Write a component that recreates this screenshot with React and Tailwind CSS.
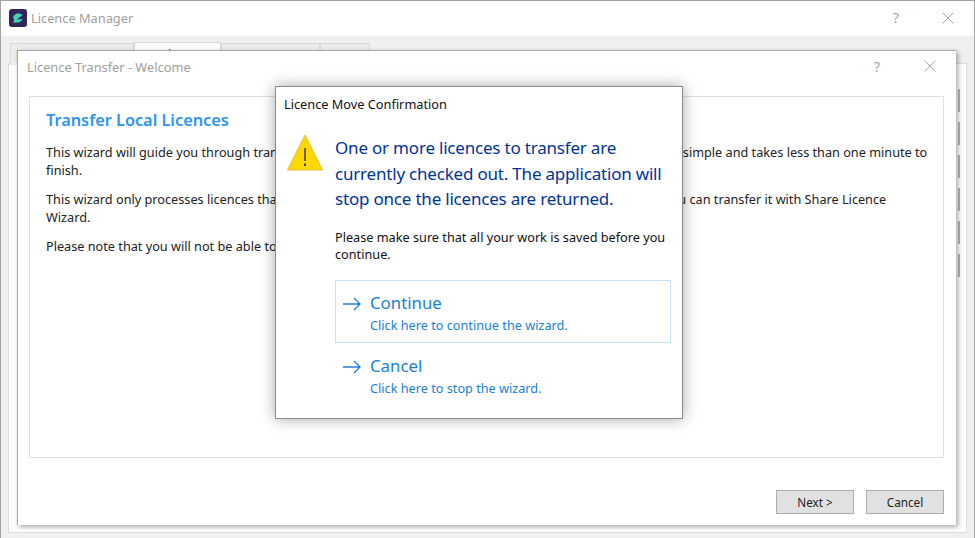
const font = { fontFamily: '"Noto Sans", sans-serif' };

const CloseGlyph = () => (
  <svg width="12" height="12" viewBox="0 0 12 12" fill="none" stroke="#a6a6a6" strokeWidth="1">
    <path d="M.5.5l11 11M11.5.5l-11 11" />
  </svg>
);

const AppLogo = () => (
  <svg width="18" height="18" viewBox="0 0 18 18">
    <rect width="18" height="18" rx="3" fill="#33265c" />
    <path d="M4 9.5C4 6.5 6.5 4.5 9.5 4.5c1.6 0 3 .5 4 1.5L8 10.5l5.5-.5c-.8 2.2-2.8 3.5-5 3.5-1 0-2-.1-4 .5.4-1.5.5-3 .5-4.5z" fill="#3fd6b4" />
  </svg>
);

const WarningIcon = () => (
  <svg width="36" height="37" viewBox="0 0 36 37">
    <path d="M18 1L35.5 36H.5z" fill="#ffd800" stroke="#e8b93c" strokeWidth="1" strokeLinejoin="round" />
    <path d="M18 14v13" stroke="#111" strokeWidth="1.2" />
    <path d="M18 29.5v2.5" stroke="#111" strokeWidth="1.5" />
  </svg>
);

const Arrow = () => (
  <svg width="18" height="14" viewBox="0 0 18 14" fill="none" stroke="#1a7fd6" strokeWidth="1.3">
    <path d="M0 7h17M11 1l6 6-6 6" />
  </svg>
);

const tabs = [
  { label: 'Licence Activation', width: 'w-[124px]' },
  { label: 'Local Licences', width: 'w-[87px]', active: true },
  { label: 'Network Licences', width: 'w-[99px]' },
  { label: 'About', width: 'w-[50px]' },
];

const actions = [
  { title: 'Continue', hint: 'Click here to continue the wizard.', focused: true },
  { title: 'Cancel', hint: 'Click here to stop the wizard.' },
];

const App = () => {
  return (
    <div style={font} className="relative w-[975px] h-[538px] overflow-hidden bg-[#f0f0f0] border-t border-l border-r border-[#a3a3a3]">
      {/* Bit of the desktop behind the window */}
      <div className="absolute left-[340px] -top-[1px] flex h-[1px] w-[77px] bg-[#5a4f7a]">
        <div className="ml-[21px] w-[5px] bg-[#4fb8a0]" />
        <div className="ml-[19px] w-[9px] bg-[#4fb8a0]" />
      </div>

      {/* Main window */}
      <div className="flex items-center h-[35px] bg-white pl-[8px] pr-[20px]">
        <span className="mb-[2px] flex"><AppLogo /></span>
        <span className="ml-[4px] text-[12.8px] text-[#a0a0a0]">Licence Manager</span>
        <span className="ml-auto mb-[2px] text-[14px] text-[#a6a6a6]">?</span>
        <span className="ml-[43px] mb-[2px] flex"><CloseGlyph /></span>
      </div>
      <div className="flex pl-[9px] pt-[7px] h-[14px] overflow-visible">
        {tabs.map((tab) => (
          <div
            key={tab.label}
            className={`${tab.width} shrink-0 h-[22px] px-[5px] text-[12px] leading-[24px] text-[#333] border border-b-0 border-[#d9d9d9] ${tab.active ? 'bg-white -mt-[1px] pl-[7px]' : 'bg-[#ececec]'}`}
          >
            {tab.label}
          </div>
        ))}
      </div>
      <div className="mx-[7px] mt-[13px] h-[470px] bg-white border border-[#dcdcdc] flex flex-col items-end pr-[6px] pt-[25px] gap-[10px]">
        {[0, 1, 2, 3, 4, 5].map((i) => (
          <div key={i} className="h-[23px] w-[2px] bg-[#b4b4b4]" />
        ))}
      </div>

      {/* Wizard dialog */}
      <div className="absolute left-[16px] top-[49px] w-[939px] h-[475px] bg-white border-t border-l border-[#a8a8a8] shadow-[2px_2px_5px_rgba(0,0,0,0.35)] flex flex-col">
        <div className="flex items-center h-[34px] pl-[9px] pr-[20px] text-[12.8px] text-[#a0a0a0]">
          <span>Licence Transfer - Welcome</span>
          <span className="ml-auto mb-[3px] text-[14px] text-[#a6a6a6]">?</span>
          <span className="ml-[44px] mb-[4px] flex"><CloseGlyph /></span>
        </div>
        <div className="mt-[11px] ml-[11px] w-[915px] h-[362px] border border-[#e0e0e0] pl-[16px] pr-[12px] pt-[12px] text-[12.7px] leading-[17.5px] text-[#222]">
          <h1 className="text-[16.3px] leading-[22px] font-semibold text-[#2b95f5]">Transfer Local Licences</h1>
          <p className="mt-[13px]">
            This wizard will guide you through transferring all your local licences to any other computer. The process is simple and takes less than one minute to finish.
          </p>
          <p className="mt-[12px]">
            This wizard only processes licences that are stored on this computer. If a licence is shared on a network, you can transfer it with Share Licence Wizard.
          </p>
          <p className="mt-[12px]">
            Please note that you will not be able to use the application during the transfer.
          </p>
        </div>
        <div className="flex justify-end gap-[12px] mt-[32px] pr-[12px]">
          <button className="w-[78px] h-[24px] pt-[1px] bg-[#e1e1e1] border border-[#adadad] text-[11.7px] text-[#222]">Next &gt;</button>
          <button className="w-[78px] h-[24px] pt-[1px] bg-[#e1e1e1] border border-[#adadad] text-[11.7px] text-[#222]">Cancel</button>
        </div>
      </div>

      {/* Confirmation dialog */}
      <div className="absolute left-[274px] top-[85px] w-[408px] h-[333px] bg-white border border-[#8c8c8c] shadow-[0_0_14px_rgba(0,0,0,0.35)] pl-[8px] pr-[11px] pt-[7px]">
        <div className="text-[12.75px] leading-[20px] text-[#111]">Licence Move Confirmation</div>
        <div className="flex mt-[18px]">
          <div className="ml-[3px] mt-[2px] w-[48px] shrink-0"><WarningIcon /></div>
          <div className="flex-1">
            <div className="pt-[3px] text-[17px] tracking-[-0.2px] leading-[25.5px] text-[#003399]">
              One or more licences to transfer are currently checked out. The application will stop once the licences are returned.
            </div>
            <p className="mt-[17px] text-[12.7px] leading-[17px] text-[#111]">
              Please make sure that all your work is saved before you continue.
            </p>
            <div className="mt-[17px] flex flex-col">
              {actions.map((a) => (
                <div
                  key={a.title}
                  className={`flex h-[63px] pl-[7px] pt-[9px] border ${a.focused ? 'border-[#c5e2f6]' : 'border-transparent'}`}
                >
                  <div className="mt-[7px] w-[27px] shrink-0"><Arrow /></div>
                  <div className="text-[#1a7fd6]">
                    <div className="text-[16.8px] leading-[25px]">{a.title}</div>
                    <div className="mt-[1px] text-[12.7px] leading-[18px]">{a.hint}</div>
                  </div>
                </div>
              ))}
            </div>
          </div>
        </div>
      </div>
    </div>
  );
};

export default App;
